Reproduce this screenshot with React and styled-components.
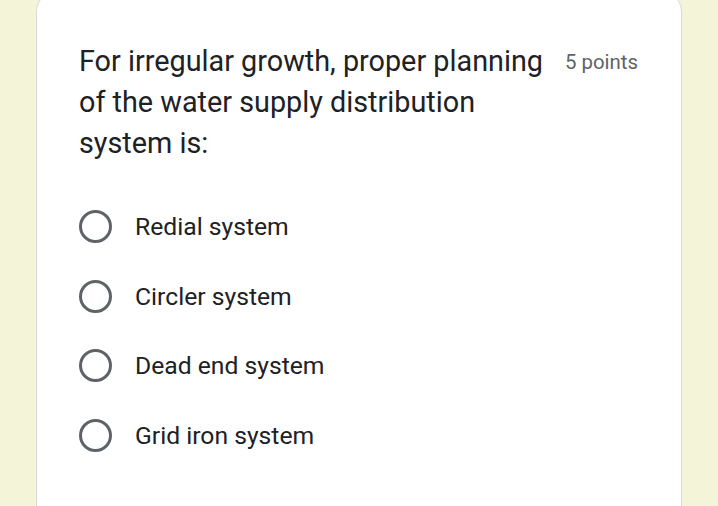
import React from "react";
import styled, { createGlobalStyle } from "styled-components";

const Global = createGlobalStyle`
  html, body { margin: 0; padding: 0; background: #f4f4d8; }
  body { font-family: Roboto, "Noto Sans", Arial, sans-serif; overflow: hidden; }
`;

const Page = styled.div`
  width: 718px;
  height: 506px;
  padding: 0 36px;
  box-sizing: border-box;
  overflow: hidden;
`;

const Card = styled.div`
  margin-top: -10px;
  background: #ffffff;
  border: 1px solid #dadada;
  border-radius: 22px;
  height: 560px;
  box-sizing: border-box;
  padding: 50px 43px 0 42px;
`;

const Header = styled.div`
  display: flex;
  align-items: flex-start;
  justify-content: space-between;
`;

const Question = styled.div`
  font-size: 28.8px;
  line-height: 41px;
  color: #202124;
`;

const Points = styled.div`
  font-size: 20.4px;
  color: #5f6368;
  margin-top: 9px;
  white-space: nowrap;
`;

const Options = styled.div`
  display: flex;
  flex-direction: column;
  gap: 36.5px;
  margin-top: 46px;
`;

const Option = styled.label`
  display: flex;
  align-items: center;
  gap: 23px;
  height: 33px;
`;

const Radio = styled.span`
  width: 27px;
  height: 27px;
  border: 3px solid #5f6368;
  border-radius: 50%;
  flex: none;
`;

const OptionText = styled.span`
  font-size: 24.7px;
  color: #202124;
`;

const options = ["Redial system", "Circler system", "Dead end system", "Grid iron system"];

export default function App() {
  return (
    <>
      <Global />
      <Page>
        <Card>
          <Header>
            <Question>
              For irregular growth, proper planning
              <br />
              of the water supply distribution
              <br />
              system is:
            </Question>
            <Points>5 points</Points>
          </Header>
          <Options>
            {options.map((o) => (
              <Option key={o}>
                <Radio />
                <OptionText>{o}</OptionText>
              </Option>
            ))}
          </Options>
        </Card>
      </Page>
    </>
  );
}
